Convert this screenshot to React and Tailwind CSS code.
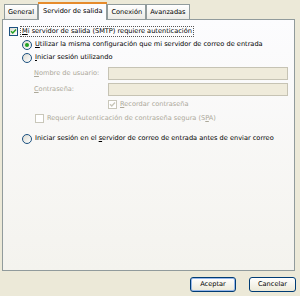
const Check = ({ checked, disabled }) => (
  <span
    className={`inline-flex items-center justify-center w-[9px] h-[9px] shrink-0 border ${
      disabled ? 'border-[#c9c7ba] bg-white' : 'border-[#1c5180] bg-gradient-to-br from-[#dcdbd3] to-white'
    }`}
  >
    {checked && (
      <svg width="7" height="7" viewBox="0 0 7 7">
        <path d="M1 3.2 L2.8 5 L6 1.6" fill="none" stroke={disabled ? '#c9c7ba' : '#21a121'} strokeWidth="1.4" />
      </svg>
    )}
  </span>
);

const Radio = ({ checked }) => (
  <span className="inline-flex items-center justify-center w-[10px] h-[10px] shrink-0 rounded-full border border-[#1c5180] bg-gradient-to-br from-[#dcdbd3] to-white">
    {checked && <span className="w-[4px] h-[4px] rounded-full bg-[#21a121]" />}
  </span>
);

const U = ({ children }) => <span className="underline underline-offset-[1px]">{children}</span>;

const Tab = ({ label, active }) =>
  active ? (
    <div className="relative h-[18px] px-[4px] flex items-center bg-[#fcfcfe] border border-b-0 border-[#919b9c] -mb-px z-10">
      <div className="absolute -top-px -left-px -right-px h-[2px] bg-[#e68b2c]" />
      <span>{label}</span>
    </div>
  ) : (
    <div className="h-[15px] px-[3px] flex items-center bg-gradient-to-b from-white to-[#ecebe6] border border-b-0 border-[#919b9c]">
      <span>{label}</span>
    </div>
  );

const Field = () => <div className="w-[180px] h-[13px] bg-[#efebdb] border border-[#c6c3b4]" />;

const Row = ({ className = '', children }) => (
  <div className={`h-[13px] flex items-center whitespace-nowrap ${className}`}>{children}</div>
);

export default function App() {
  return (
    <div
      className="w-[300px] h-[296px] bg-[#ece9d8] text-black text-[6.6px] leading-none flex flex-col overflow-hidden"
      style={{ fontFamily: '"DejaVu Sans", "Liberation Sans", sans-serif' }}
    >
      <div className="flex items-end pl-[4px] pt-[1px] h-[19px]">
        <Tab label="General" />
        <Tab label="Servidor de salida" active />
        <Tab label="Conexión" />
        <Tab label="Avanzadas" />
      </div>

      <div className="ml-[2px] w-[293px] h-[252px] border border-[#919b9c] bg-gradient-to-b from-[#fcfcfe] to-[#f4f3ee] flex flex-col">
        <Row className="mt-[5px] pl-[6px] gap-[3px]">
          <Check checked />
          <span className="outline outline-1 outline-dotted outline-[#555] px-[1px] py-[1px]">
            <U>M</U>i servidor de salida (SMTP) requiere autenticación
          </span>
        </Row>
        <Row className="pl-[19px] gap-[3px]">
          <Radio checked />
          <span>
            <U>U</U>tilizar la misma configuración que mi servidor de correo de entrada
          </span>
        </Row>
        <Row className="pl-[19px] gap-[3px]">
          <Radio />
          <span>
            <U>I</U>niciar sesión utilizando
          </span>
        </Row>
        <Row className="mt-[3px] pl-[31px] text-[#aca899]">
          <span className="w-[74px]">
            <U>N</U>ombre de usuario:
          </span>
          <Field />
        </Row>
        <Row className="mt-[3px] pl-[31px] text-[#aca899]">
          <span className="w-[74px]">
            <U>C</U>ontraseña:
          </span>
          <Field />
        </Row>
        <Row className="mt-[2px] pl-[105px] gap-[3px] text-[#aca899]">
          <Check checked disabled />
          <span>
            <U>R</U>ecordar contraseña
          </span>
        </Row>
        <Row className="mt-[1px] pl-[32px] gap-[3px] text-[#aca899]">
          <Check disabled />
          <span>
            Requerir Autenticación de contraseña segura (S<U>P</U>A)
          </span>
        </Row>
        <Row className="mt-[7px] pl-[19px] gap-[3px]">
          <Radio />
          <span>
            Iniciar sesión en el <U>s</U>ervidor de correo de entrada antes de enviar correo
          </span>
        </Row>
      </div>

      <div className="flex justify-end gap-[13px] pr-[4px] mt-[6px]">
        <button className="w-[46px] h-[15px] rounded-[3px] border border-[#003c74] bg-gradient-to-b from-white to-[#ece9d8] shadow-[inset_0_0_0_1px_#98b8ea] flex items-center justify-center">
          Aceptar
        </button>
        <button className="w-[47px] h-[15px] rounded-[3px] border border-[#003c74] bg-gradient-to-b from-white to-[#ece9d8] flex items-center justify-center">
          Cancelar
        </button>
      </div>
    </div>
  );
}
